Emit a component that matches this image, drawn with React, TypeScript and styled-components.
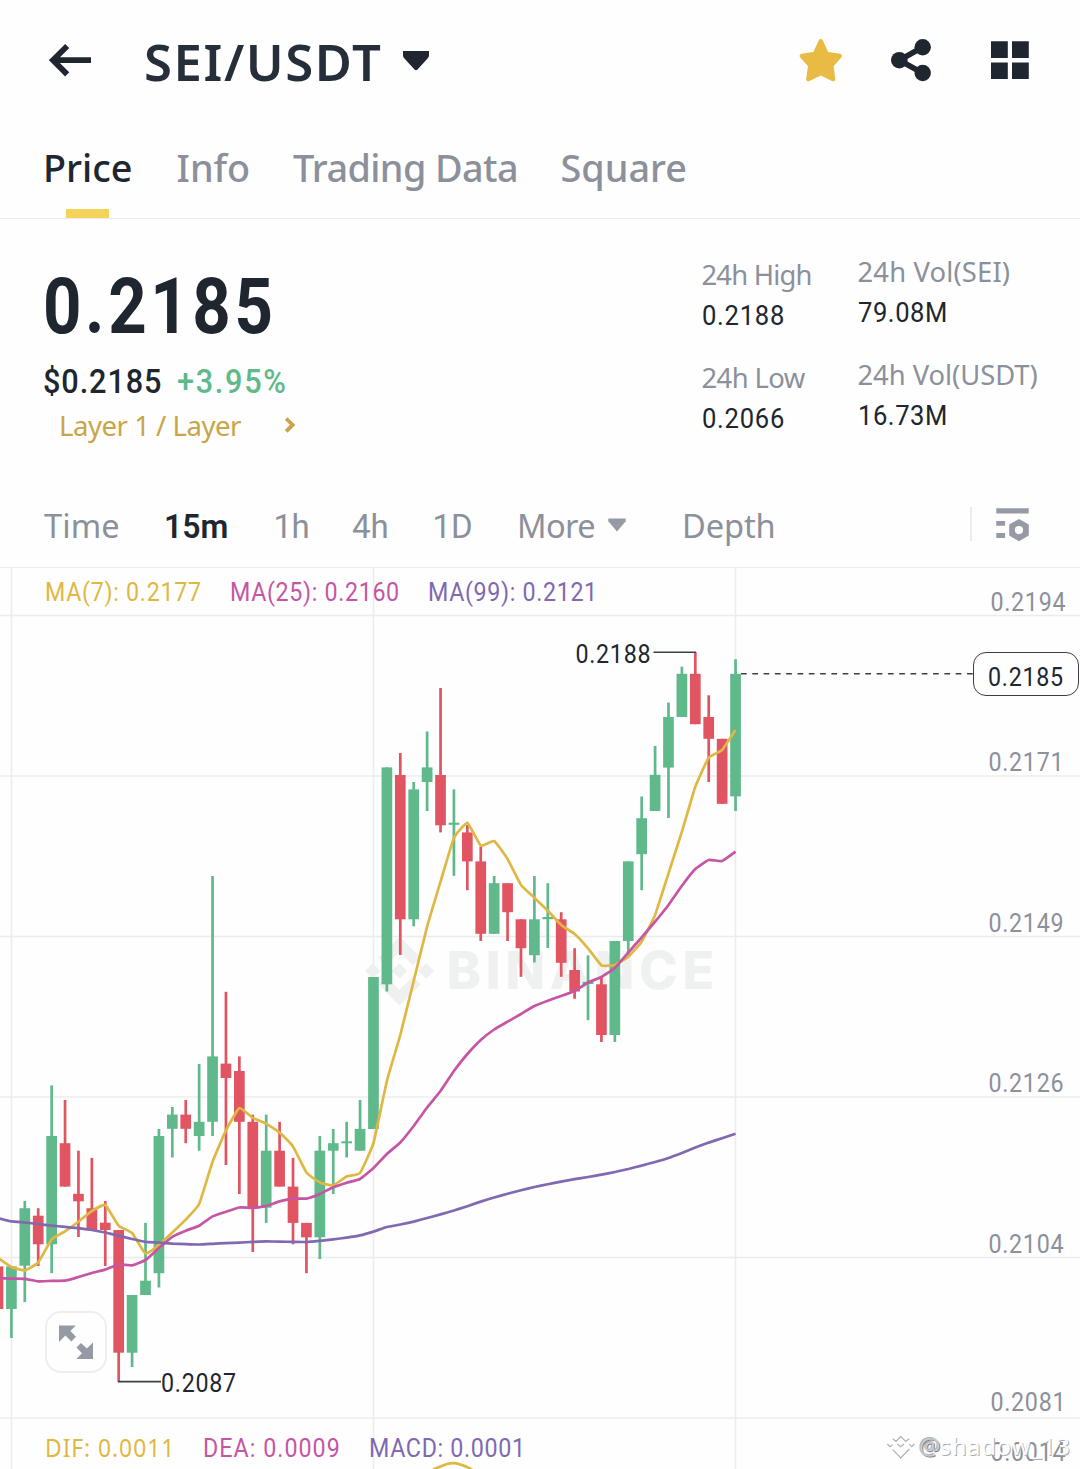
import React from 'react';
import styled, { createGlobalStyle } from 'styled-components';
import { SiBinance } from 'react-icons/si';

const c = {
  ink: '#20262f',
  title: '#262e3a',
  grey: '#8b909b',
  icon: '#959aa5',
  line: '#ececee',
  gold: '#e9bb44',
  goldText: '#c9a548',
  green: '#5fb98a',
  red: '#e05561',
  ma7: '#dfb843',
  ma25: '#c655a3',
  ma99: '#8069b0',
};
const words = `'Noto Sans', 'Open Sans', sans-serif`;
const digits = `Roboto, 'Liberation Sans', sans-serif`;
// Figures are set slightly condensed with open tracking
const condensed = 0.93;

const GlobalStyle = createGlobalStyle`
  * { box-sizing: border-box; }
  body { margin: 0; background: #fefefe; }
`;

const Screen = styled.main`
  width: 1080px;
  height: 1469px;
  overflow: hidden;
  display: flex;
  flex-direction: column;
  background: #fefefe;
  color: ${c.ink};
`;

interface TypeProps {
  $size: number;
  $lh: number;
  $num?: boolean;
  $weight?: number;
  $ls?: number;
  $color?: string;
  $slot?: number;
  $stretch?: number;
}
const Type = styled.span<TypeProps>`
  display: block;
  flex: none;
  white-space: pre;
  font-family: ${(p) => (p.$num ? digits : words)};
  font-size: ${(p) => p.$size}px;
  line-height: ${(p) => p.$lh}px;
  font-weight: ${(p) => p.$weight ?? 400};
  letter-spacing: ${(p) => p.$ls ?? 0}px;
  color: ${(p) => p.$color ?? c.ink};
  width: ${(p) => (p.$slot ? `${p.$slot}px` : 'auto')};
  transform: ${(p) => (p.$stretch ? `scaleX(${p.$stretch})` : 'none')};
  transform-origin: 0 50%;
`;

const Header = styled.header`
  flex: none;
  height: 120px;
  padding: 0 50px 0 49px;
  display: flex;
  align-items: center;
`;
const PairButton = styled.div`
  display: flex;
  align-items: center;
  margin-left: 52px;
`;
const PairName = styled.h1`
  margin: 0;
  padding-top: 3px;
`;
const HeaderActions = styled.div`
  margin-left: auto;
  display: grid;
  grid-template-columns: 91px 100px 40px;
  align-items: center;
`;
const Icon = styled.svg`
  display: block;
  flex: none;
`;

const Tabs = styled.nav`
  flex: none;
  display: flex;
  height: 99px;
  padding: 18px 0 0 43px;
  border-bottom: 1px solid ${c.line};
`;
const Tab = styled.div`
  display: flex;
  flex-direction: column;
`;
const Underline = styled.i`
  margin: auto 0 0 23px;
  width: 43px;
  height: 9px;
  background: #f5d35b;
`;

const Summary = styled.section`
  flex: none;
  display: grid;
  grid-template-columns: 658.5px 156px 1fr;
  height: 270px;
  padding-left: 43px;
`;
const PriceColumn = styled.div`
  display: flex;
  flex-direction: column;
  padding-top: 48px;
`;
const FiatRow = styled.div`
  display: flex;
  margin-top: 15px;
`;
const TagRow = styled.div`
  display: flex;
  align-items: center;
  margin-top: 6px;
  padding-left: 16px;
`;
const StatColumn = styled.div<{ $top: number }>`
  display: flex;
  flex-direction: column;
  gap: 22px;
  padding-top: ${(p) => p.$top}px;
`;
const Stat = styled.div`
  display: flex;
  flex-direction: column;
  gap: 1px;
`;

const Intervals = styled.nav`
  flex: none;
  display: flex;
  align-items: flex-start;
  height: 79px;
  padding: 13px 0 0 44px;
  border-bottom: 1px solid ${c.line};
`;
const MoreButton = styled.div`
  display: flex;
  align-items: center;
  width: 165px;
`;
const Divider = styled.i`
  width: 2px;
  height: 34px;
  margin: 5px 23px 0 0;
  background: ${c.line};
`;
const SettingsButton = styled.div`
  padding-top: 5px;
`;

const Chart = styled.section`
  position: relative;
  flex: none;
  height: 901px;
`;
const Legend = styled.div<{ $top: number }>`
  position: absolute;
  left: 45px;
  top: ${(p) => p.$top}px;
  display: flex;
`;
const ExpandButton = styled.button`
  position: absolute;
  left: 45px;
  top: 743px;
  width: 62px;
  height: 62px;
  padding: 0;
  display: flex;
  align-items: center;
  justify-content: center;
  border: 2px solid #eceeef;
  border-radius: 16px;
  background: #fefefe;
`;
const PriceTag = styled.div`
  position: absolute;
  left: 973px;
  top: 84px;
  width: 106px;
  height: 44px;
  display: flex;
  align-items: center;
  padding: 7px 0 0 14px;
  border: 1.5px solid #3a404a;
  border-radius: 13px;
  background: #fefefe;
`;
const Signature = styled.div`
  position: absolute;
  left: 886px;
  top: 864px;
  display: flex;
  align-items: center;
  gap: 4px;
`;
const Handle = styled.span`
  font: 400 24px/27px 'Noto Sans', sans-serif;
  letter-spacing: 0.6px;
  color: #fdfdfd;
  text-shadow: 1px 1px 0.5px #a9acb3;
`;
const HandleAt = styled.span`
  letter-spacing: -1px;
  color: #c9cbd0;
  text-shadow: 1px 1px 0 #85888f, -1px -1px 0 #b0b3b9;
`;

const AxisText = styled.text<{ $dark?: boolean }>`
  font-family: ${digits};
  font-size: 25px;
  letter-spacing: 0.8px;
  fill: ${(p) => (p.$dark ? c.ink : c.grey)};
`;
const WatermarkText = styled.text`
  font-family: Inter, sans-serif;
  font-weight: 800;
  font-size: 52px;
  letter-spacing: 4.7px;
  fill: #eff0f0;
`;

// Candle: direction, high, body top, body bottom, low (all in chart y units)
type Candle = ['g' | 'r', number, number, number, number];
const candles: Candle[] = [
  ['r', 1266.4, 1266.4, 1309, 1309],
  ['g', 1266.4, 1266.4, 1309, 1338],
  ['g', 1201, 1208.2, 1265.7, 1302],
  ['r', 1208.2, 1215.7, 1244.3, 1266],
  ['g', 1085.4, 1136, 1244.3, 1273.2],
  ['r', 1100, 1143.2, 1186.6, 1186.6],
  ['r', 1150.7, 1193.8, 1201.3, 1237],
  ['r', 1157.9, 1208.2, 1230, 1230],
  ['r', 1201, 1222.7, 1230, 1266],
  ['r', 1230, 1230, 1352.7, 1381.8],
  ['g', 1295, 1295, 1352.7, 1367],
  ['g', 1222.9, 1280.7, 1295, 1295],
  ['g', 1129, 1136, 1273.2, 1287.5],
  ['g', 1107, 1114.6, 1128.8, 1157.5],
  ['r', 1100, 1114.6, 1128.8, 1143.2],
  ['g', 1064, 1121.8, 1136, 1150.7],
  ['g', 876, 1056.4, 1121.8, 1136],
  ['r', 991.8, 1063.6, 1078, 1165],
  ['r', 1056.4, 1071, 1121.8, 1194],
  ['r', 1114.6, 1121.8, 1207.7, 1252],
  ['g', 1114.6, 1150.7, 1207.7, 1222.9],
  ['r', 1121.8, 1150.7, 1186.6, 1186.6],
  ['r', 1157.9, 1186.6, 1222.9, 1244.3],
  ['r', 1222.9, 1222.9, 1237.3, 1273.2],
  ['g', 1136, 1150.7, 1237.3, 1259],
  ['g', 1129, 1143.2, 1150.7, 1194],
  ['g', 1121.8, 1141.3, 1143.3, 1157.5],
  ['g', 1100, 1129, 1150.7, 1150.7],
  ['g', 977, 977, 1129, 1129],
  ['g', 767.4, 767.4, 984.3, 991.5],
  ['r', 753, 775, 919.3, 955],
  ['g', 782, 789.4, 919.3, 926.3],
  ['g', 731.5, 767.4, 782, 811],
  ['r', 688, 775, 825.3, 832.4],
  ['g', 789.4, 822.7, 824.8, 875.8],
  ['r', 825, 832.4, 861.4, 890.2],
  ['r', 846.7, 861.4, 933.8, 941],
  ['g', 876, 883.2, 933.8, 933.8],
  ['r', 883.2, 883.2, 912.2, 941],
  ['r', 919.3, 919.3, 948.2, 976.8],
  ['g', 876, 919.3, 955.2, 962.4],
  ['g', 883.2, 917, 919.2, 948],
  ['r', 912.2, 919.3, 962.8, 976.8],
  ['r', 948.2, 970, 991.5, 998.8],
  ['g', 955.4, 981.8, 984, 1020.2],
  ['r', 976.8, 984.3, 1035, 1042],
  ['g', 941, 941, 1035, 1042],
  ['g', 861.4, 861.4, 941, 955],
  ['g', 796.5, 818.2, 854.2, 890.2],
  ['g', 746, 774.8, 811, 811],
  ['g', 702.6, 717, 767.6, 818],
  ['g', 666.6, 673.8, 717, 717],
  ['r', 652, 673.8, 724.2, 724.2],
  ['r', 695.3, 717, 738.8, 782],
  ['r', 738.8, 738.8, 803.8, 803.8],
  ['g', 659.2, 673.8, 796.4, 811],
];
const step = 13.41;
const candleX = (i: number) => 11.4 + (i - 1) * step;

const ma7 = [
  1258, 1267, 1270.4, 1262.5, 1239.3, 1231.4, 1221.8, 1211, 1205, 1225.7, 1233, 1253.6, 1245, 1232.5, 1219.6, 1204,
  1161.8, 1130.4, 1108, 1117.9, 1123.6, 1132.5, 1146.4, 1172.5, 1182.5, 1185.4, 1176.4, 1173, 1143, 1081, 1035, 981,
  926.7, 881.7, 838, 822.9, 845.7, 841, 859, 885, 897.7, 910.7, 925, 934, 948.3, 965.3, 965, 956.7, 941.7, 915, 873.3,
  831.7, 786.7, 757.7, 750, 730,
];
const ma25 = [
  1278, 1278.6, 1278.8, 1281.4, 1280.8, 1280.7, 1277, 1273, 1269.6, 1264.5, 1265.4, 1260, 1248, 1236.8, 1230.7, 1225.7,
  1216.4, 1211.8, 1207.5, 1207.9, 1205.9, 1201.4, 1198.6, 1198.6, 1194, 1187.2, 1182.7, 1179, 1168, 1154, 1142.5, 1126,
  1107.5, 1091, 1071, 1054, 1040, 1029.5, 1021.7, 1014, 1006, 1000.7, 996, 991, 982.5, 977, 968, 952.7, 937.3, 921.7,
  905, 885.7, 869, 860, 861, 851.7,
];
const ma99 = [
  1218, 1221.4, 1222.5, 1224, 1225.6, 1226.9, 1228.2, 1230, 1232.5, 1235.7, 1239, 1241.8, 1242.5, 1243.6, 1244.2, 1244.5,
  1243.8, 1243.1, 1242.6, 1241.9, 1241.4, 1241.6, 1241.9, 1242, 1240.8, 1239.3, 1237.6, 1235.4, 1231.6, 1227, 1224.5,
  1221.6, 1218, 1214.4, 1210.5, 1206.2, 1201.6, 1197.5, 1193.8, 1190.2, 1187, 1184.2, 1181.6, 1179.2, 1177, 1174.6,
  1172, 1169, 1165.6, 1162, 1158, 1153, 1147.6, 1142.6, 1138.2, 1133.7,
];
// Catmull-Rom smoothing with low tension keeps the corners of the averages crisp
const toPath = (ys: number[]) => {
  const p = ys.map((y, i) => [candleX(i), y]);
  return p.reduce((d, [x, y], i) => {
    if (i === 0) return `M${x} ${y}`;
    const a = p[Math.max(0, i - 2)];
    const b = p[i - 1];
    const n = p[Math.min(p.length - 1, i + 1)];
    const t = 0.06;
    return `${d}C${b[0] + (x - a[0]) * t} ${b[1] + (y - a[1]) * t} ${x - (n[0] - b[0]) * t} ${y - (n[1] - b[1]) * t} ${x} ${y}`;
  }, '');
};

const gridRows = [615.5, 776, 936.5, 1097, 1257.5, 1418];
const gridCols = [11.5, 373.5, 735.5];
const axis: [string, number, number, boolean?][] = [
  ['0.2188', 575.4, 653.7, true],
  ['0.2087', 161, 1382.7, true],
  ['0.2194', 990.4, 601.8],
  ['0.2171', 988.4, 761.7],
  ['0.2149', 988.4, 922.7],
  ['0.2126', 988.4, 1082.8],
  ['0.2104', 988.4, 1243.7],
  ['0.2081', 990.4, 1401.7],
  ['0.0014', 990.4, 1451.6],
];

const tabs = [
  { label: 'Price', slot: 133.5, ls: 0, active: true },
  { label: 'Info', slot: 116.5, ls: 0 },
  { label: 'Trading Data', slot: 267.5, ls: -0.6 },
  { label: 'Square', slot: 140, ls: 0 },
];
const stats = [
  {
    top: 36,
    items: [
      ['24h High', '0.2188', -0.8, 0.8],
      ['24h Low', '0.2066', -0.6, 0.8],
    ],
  },
  {
    top: 33,
    items: [
      ['24h Vol(SEI)', '79.08M', 0.15, 0.6],
      ['24h Vol(USDT)', '16.73M', -0.05, 0.6],
    ],
  },
] as { top: number; items: [string, string, number, number][] }[];

export default function App() {
  return (
    <Screen>
      <GlobalStyle />
      <Header>
        <Icon width="43" height="40" viewBox="49 40 43 40" fill="none" stroke={c.ink} strokeWidth="5.8">
          <path d="M67.2 46L53 60.2L67.2 74.4M53 60.2H91" />
        </Icon>
        <PairButton>
          <PairName>
            <Type $size={50.8} $lh={68} $weight={600} $ls={1.6} $color={c.title} $slot={259}>
              SEI/USDT
            </Type>
          </PairName>
          <Icon width="26" height="22" viewBox="403 49 26 22" fill={c.ink}>
            <path d="M403 51H429V55.5Q429 57 427.8 58.2L417.5 69.6Q416 71 414.5 69.6L404.2 58.2Q403 57 403 55.5Z" />
          </Icon>
        </PairButton>
        <HeaderActions>
          <Icon width="44" height="46" viewBox="799 37 44 46">
            <path
              d="M820.8 41.4L826.6 54L839.6 56L831.2 65.6L833 79L820.8 73L808.4 79L810.4 65.6L802 56L815 54Z"
              fill={c.gold}
              stroke={c.gold}
              strokeWidth="4.6"
              strokeLinejoin="round"
            />
          </Icon>
          <Icon width="44" height="46" viewBox="890 37 44 46" fill={c.ink}>
            <path d="M922.5 47.2L899.3 60.2L922.5 73" fill="none" stroke={c.ink} strokeWidth="5.6" />
            <circle cx="922.7" cy="47.2" r="8.2" />
            <circle cx="899.3" cy="60.2" r="8.3" />
            <circle cx="922.7" cy="73" r="8.2" />
          </Icon>
          <Icon width="40" height="40" viewBox="990 40 40 40" fill={c.ink}>
            <path d="M991 41.3h16.8v16.6H991zM1012 41.3h16.8v16.6H1012zM991 62.4h16.8V79H991zM1012 62.4h16.8V79H1012z" />
          </Icon>
        </HeaderActions>
      </Header>

      <Tabs>
        {tabs.map((t) => (
          <Tab key={t.label}>
            <Type $size={37.8} $lh={60} $weight={500} $ls={t.ls} $slot={t.slot} $color={t.active ? c.ink : c.grey}>
              {t.label}
            </Type>
            {t.active && <Underline />}
          </Tab>
        ))}
      </Tabs>

      <Summary>
        <PriceColumn>
          <Type $num $size={78} $lh={80} $weight={700} $ls={4.2} $stretch={0.86}>
            0.2185
          </Type>
          <FiatRow>
            <Type $num $size={33} $lh={40} $weight={500} $ls={0.95} $stretch={condensed} $slot={133.5}>
              $0.2185
            </Type>
            <Type $num $size={33} $lh={40} $weight={500} $ls={1.8} $stretch={condensed} $color={c.green}>
              +3.95%
            </Type>
          </FiatRow>
          <TagRow>
            <Type $size={27.6} $lh={34} $ls={-0.5} $color={c.goldText} $slot={225}>
              Layer 1 / Layer
            </Type>
            <Icon width="13" height="18" viewBox="284 416.5 13 18" fill="none" stroke={c.goldText} strokeWidth="3.8">
              <path d="M286.2 419L292.6 425.4L286.2 431.8" />
            </Icon>
          </TagRow>
        </PriceColumn>
        {stats.map((col) => (
          <StatColumn key={col.top} $top={col.top}>
            {col.items.map(([label, value, ls, vls]) => (
              <Stat key={label}>
                <Type $size={27.4} $lh={40} $ls={ls} $color={c.grey}>
                  {label}
                </Type>
                <Type $num $size={27.5} $lh={40} $ls={vls} $stretch={condensed}>
                  {value}
                </Type>
              </Stat>
            ))}
          </StatColumn>
        ))}
      </Summary>

      <Intervals>
        <Type $size={32.6} $lh={48} $ls={0.1} $color={c.grey} $slot={120}>
          Time
        </Type>
        <Type $num $size={33} $lh={50} $weight={600} $ls={0} $stretch={0.97} $slot={109.5}>
          15m
        </Type>
        <Type $num $size={33} $lh={50} $ls={-0.5} $color={c.grey} $slot={78.5}>
          1h
        </Type>
        <Type $num $size={33} $lh={50} $ls={0} $color={c.grey} $slot={80.5}>
          4h
        </Type>
        <Type $num $size={33} $lh={50} $ls={-0.1} $color={c.grey} $slot={84.5}>
          1D
        </Type>
        <MoreButton>
          <Type $size={32.6} $lh={48} $ls={-0.6} $color={c.grey} $slot={90.5}>
            More
          </Type>
          <Icon width="18" height="17" viewBox="0 0 18 17" fill={c.icon}>
            <path d="M0.3 0.5H17.7V3.2L9 13.6L0.3 3.2Z" />
          </Icon>
        </MoreButton>
        <Type $size={32.6} $lh={48} $ls={-0.1} $color={c.grey} $slot={288}>
          Depth
        </Type>
        <Divider />
        <SettingsButton>
          <Icon width="34" height="36" viewBox="995 507 34 36" fill={c.icon}>
            <path d="M996.3 508.2h32.4v5.2h-32.4zM996.3 521h8.8v4.8h-8.8zM996.3 533h8.8v5h-8.8z" />
            <path
              fillRule="evenodd"
              d="M1019 519L1028.8 524.6V535.6L1019 541.2L1009.2 535.6V524.6ZM1019 526A4.1 4.1 0 1 0 1019 534.2A4.1 4.1 0 1 0 1019 526Z"
            />
          </Icon>
        </SettingsButton>
      </Intervals>

      <Chart>
        <Icon width="1080" height="901" viewBox="0 568 1080 901">
          {gridRows.map((y) => (
            <line key={y} x1="0" x2="1080" y1={y} y2={y} stroke={c.line} strokeWidth="1.5" />
          ))}
          {gridCols.map((x) => (
            <line key={x} x1={x} x2={x} y1="568" y2="1469" stroke={c.line} strokeWidth="1.5" />
          ))}
          <SiBinance x="365" y="936.5" size={69} color="#eff0f0" />
          <WatermarkText x="446.5" y="989.3">
            BINANCE
          </WatermarkText>
          {candles.map(([dir, high, top, bottom, low], i) => (
            <g key={i} fill={dir === 'g' ? c.green : c.red}>
              <rect x={candleX(i) - 1.35} y={high} width="2.7" height={low - high} />
              <rect x={candleX(i) - 5.35} y={top} width="10.7" height={bottom - top} />
            </g>
          ))}
          <g fill="none" strokeWidth="2.7" strokeLinejoin="round">
            <path d={toPath(ma7)} stroke={c.ma7} />
            <path d={toPath(ma25)} stroke={c.ma25} />
            <path d={toPath(ma99)} stroke={c.ma99} />
            <path d="M433 1469.6Q441 1466 447 1464Q454 1462 460 1464.4Q466 1466 472 1469.6" stroke={c.ma7} />
          </g>
          <g fill="none" stroke="#3a404a" strokeWidth="1.6">
            <path d="M653.5 652.2H696" />
            <path d="M118 1381.6H161" />
            <path d="M741 673.7H973" strokeDasharray="5.7 5.6" />
          </g>
          {axis.map(([label, x, mid, dark]) => (
            <AxisText key={label} $dark={dark} transform={`translate(${x} ${mid + 8.9}) scale(${condensed} 1)`}>
              {label}
            </AxisText>
          ))}
        </Icon>
        <Legend $top={8.5}>
          <Type $num $size={25} $lh={31} $ls={0.75} $stretch={condensed} $color={c.ma7} $slot={184.5}>
            MA(7): 0.2177
          </Type>
          <Type $num $size={25} $lh={31} $ls={0.7} $stretch={condensed} $color={c.ma25} $slot={198}>
            MA(25): 0.2160
          </Type>
          <Type $num $size={25} $lh={31} $ls={0.7} $stretch={condensed} $color={c.ma99}>
            MA(99): 0.2121
          </Type>
        </Legend>
        <ExpandButton aria-label="Expand chart">
          <Icon width="36" height="36" viewBox="58 1324 36 36" fill={c.icon}>
            <path d="M59 1325.4H75.8L70.4 1331L76 1336.8L71.4 1341.4L65.4 1335.6L59 1342Z" />
            <path d="M93 1342.4V1359H76.4L82 1353.2L76.4 1347.6L81 1343L86.8 1348.6Z" />
          </Icon>
        </ExpandButton>
        <PriceTag>
          <Type $num $size={25} $lh={30} $ls={0.8} $stretch={condensed}>
            0.2185
          </Type>
        </PriceTag>
        <Legend $top={865}>
          <Type $size={24.6} $lh={30} $ls={1} $stretch={condensed} $color={c.ma7} $slot={158}>
            DIF: 0.0011
          </Type>
          <Type $num $size={25} $lh={32} $ls={1.1} $stretch={condensed} $color={c.ma25} $slot={166}>
            DEA: 0.0009
          </Type>
          <Type $num $size={25} $lh={32} $ls={0.7} $stretch={condensed} $color={c.ma99}>
            MACD: 0.0001
          </Type>
        </Legend>
        <Signature>
          <Icon width="29" height="26" viewBox="886 1435 29 26" fill="none" stroke="#a9acb3" strokeWidth="1.1">
            <path d="M892.7 1440.7L896 1443.4L900.7 1438.5L905.7 1443.4L909.3 1440.7M892.7 1451.7L900.7 1460L909.3 1451M887.3 1446L890 1448.7L892.7 1446.6M897.3 1446L900.7 1448.7L904 1446M909.3 1446L911.7 1448.7L914.3 1446" />
          </Icon>
          <Handle>
            <HandleAt>@</HandleAt>shadow_13
          </Handle>
        </Signature>
      </Chart>
    </Screen>
  );
}
